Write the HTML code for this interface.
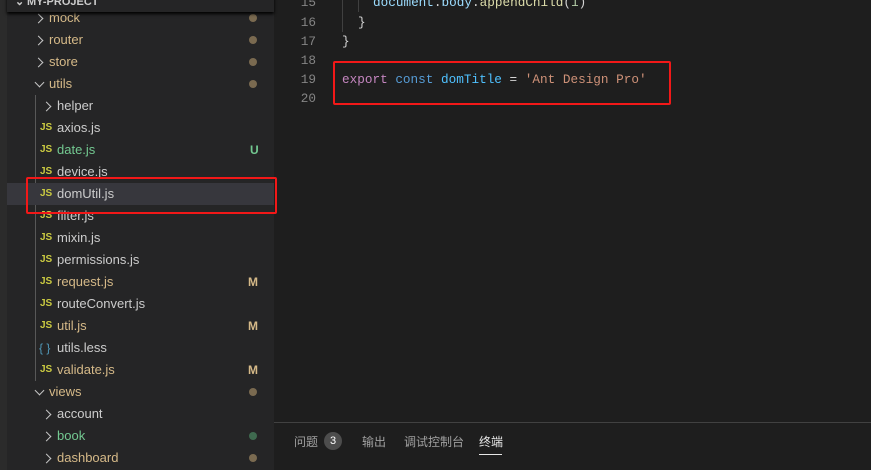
<!DOCTYPE html>
<html><head><meta charset="utf-8"><style>
*{margin:0;padding:0;box-sizing:border-box}
body{width:871px;height:470px;overflow:hidden;background:#1e1e1e;position:relative;font-family:"Segoe UI","Liberation Sans","Noto Sans CJK SC",sans-serif}
#strip{position:absolute;left:0;top:0;width:7px;height:470px;background:#2b2b2b}
#side{position:absolute;left:7px;top:0;width:267px;height:470px;background:#252526}
#hdr{position:absolute;left:7px;top:-6px;width:267px;height:18px;background:#252526;box-shadow:0 2px 3px #000;color:#ccc;font-weight:bold;font-size:11px;z-index:2}
.row{position:absolute;left:7px;width:267px;height:22px;line-height:22px;font-size:13px;color:#ccc}
.row span.t{position:absolute}
.chev{position:absolute;width:7px;height:7px;border-right:1.3px solid #c5c5c5;border-bottom:1.3px solid #c5c5c5}
.js{position:absolute;font-size:10px;font-weight:bold;color:#cbcb41;font-family:"Liberation Sans",sans-serif}
.dot{position:absolute;left:242px;top:7px;width:8px;height:8px;border-radius:50%;background:#7a6a50}
.st{position:absolute;left:241px;font-weight:bold;font-size:12px}
.y{color:#d5b988}.g{color:#73c991}
#code{position:absolute;left:274px;top:2px;width:597px;height:420px;font-family:"Liberation Mono",monospace;font-size:12.7px}
.ln{position:absolute;width:42px;text-align:right;color:#858585;left:0}
.cl{position:absolute;left:68px;white-space:pre;color:#d4d4d4}
.box{position:absolute;border:2.5px solid #f21818;border-radius:2px}
#panel{position:absolute;left:274px;top:422px;width:597px;height:48px;border-top:1px solid #414141;background:#1e1e1e;font-size:12px;color:#a0a0a0}
#panel span{position:absolute;top:10px}
</style></head><body>
<div id="strip"></div><div id="side"></div>
<div id="hdr"><span style="position:absolute;left:8px;top:1px">⌄</span><span style="position:absolute;left:20px;top:2px">MY-PROJECT</span></div>
<div style="position:absolute;left:35px;top:95px;width:1px;height:286px;background:#585858"></div>

<div class="row y" style="top:7px"><div class="chev" style="left:28px;top:8px;transform:rotate(-45deg)"></div><span class="t" style="left:42px">mock</span><div class="dot"></div></div>
<div class="row y" style="top:29px"><div class="chev" style="left:28px;top:8px;transform:rotate(-45deg)"></div><span class="t" style="left:42px">router</span><div class="dot"></div></div>
<div class="row y" style="top:51px"><div class="chev" style="left:28px;top:8px;transform:rotate(-45deg)"></div><span class="t" style="left:42px">store</span><div class="dot"></div></div>
<div class="row y" style="top:73px"><div class="chev" style="left:29px;top:6px;transform:rotate(45deg)"></div><span class="t" style="left:42px">utils</span><div class="dot"></div></div>
<div class="row" style="top:95px"><div class="chev" style="left:36px;top:8px;transform:rotate(-45deg)"></div><span class="t" style="left:50px">helper</span></div>
<div class="row" style="top:117px"><span class="js" style="left:33px">JS</span><span class="t" style="left:50px">axios.js</span></div>
<div class="row g" style="top:139px"><span class="js" style="left:33px">JS</span><span class="t" style="left:50px">date.js</span><span class="st" style="left:243px">U</span></div>
<div class="row" style="top:161px"><span class="js" style="left:33px">JS</span><span class="t" style="left:50px">device.js</span></div>
<div class="row" style="top:183px;background:#37373d"><span class="js" style="left:33px">JS</span><span class="t" style="left:50px">domUtil.js</span></div>
<div class="row" style="top:205px"><span class="js" style="left:33px">JS</span><span class="t" style="left:50px">filter.js</span></div>
<div class="row" style="top:227px"><span class="js" style="left:33px">JS</span><span class="t" style="left:50px">mixin.js</span></div>
<div class="row" style="top:249px"><span class="js" style="left:33px">JS</span><span class="t" style="left:50px">permissions.js</span></div>
<div class="row y" style="top:271px"><span class="js" style="left:33px">JS</span><span class="t" style="left:50px">request.js</span><span class="st" style="left:241px">M</span></div>
<div class="row" style="top:293px"><span class="js" style="left:33px">JS</span><span class="t" style="left:50px">routeConvert.js</span></div>
<div class="row y" style="top:315px"><span class="js" style="left:33px">JS</span><span class="t" style="left:50px">util.js</span><span class="st" style="left:241px">M</span></div>
<div class="row" style="top:337px"><span class="js" style="left:32px;color:#519aba;font-weight:normal;font-size:12px">{ }</span><span class="t" style="left:50px">utils.less</span></div>
<div class="row y" style="top:359px"><span class="js" style="left:33px">JS</span><span class="t" style="left:50px">validate.js</span><span class="st" style="left:241px">M</span></div>
<div class="row y" style="top:381px"><div class="chev" style="left:29px;top:6px;transform:rotate(45deg)"></div><span class="t" style="left:42px">views</span><div class="dot"></div></div>
<div class="row" style="top:403px"><div class="chev" style="left:36px;top:8px;transform:rotate(-45deg)"></div><span class="t" style="left:50px">account</span></div>
<div class="row g" style="top:425px"><div class="chev" style="left:36px;top:8px;transform:rotate(-45deg)"></div><span class="t" style="left:50px">book</span><div class="dot" style="background:#3f6a4f"></div></div>
<div class="row y" style="top:447px"><div class="chev" style="left:36px;top:8px;transform:rotate(-45deg)"></div><span class="t" style="left:50px">dashboard</span><div class="dot"></div></div>

<div class="box" style="left:26px;top:177px;width:251px;height:37px"></div>

<div id="code">
<div style="position:absolute;left:68px;top:-8px;width:1px;height:38px;background:#404040"></div>
<div style="position:absolute;left:84px;top:-8px;width:1px;height:18px;background:#404040"></div>
<div class="ln" style="top:-7px">15</div><div class="cl" style="top:-7px;left:99px"><span style="color:#9cdcfe">document</span>.<span style="color:#9cdcfe">body</span>.<span style="color:#dcdcaa">appendChild</span>(<span style="color:#b5cea8">1</span>)</div>
<div class="ln" style="top:13px">16</div><div class="cl" style="top:13px;left:84px">}</div>
<div class="ln" style="top:32px">17</div><div class="cl" style="top:32px">}</div>
<div class="ln" style="top:51px">18</div>
<div class="ln" style="top:70px">19</div><div class="cl" style="top:70px"><span style="color:#c586c0">export</span> <span style="color:#569cd6">const</span> <span style="color:#4fc1ff">domTitle</span> = <span style="color:#ce9178">'Ant Design Pro'</span></div>
<div class="ln" style="top:89px">20</div>
</div>
<div class="box" style="left:333px;top:61px;width:338px;height:44px"></div>

<div id="panel">
<span style="left:20px">问题</span>
<div style="position:absolute;left:50px;top:9px;width:18px;height:18px;border-radius:50%;background:#4d4d4d;color:#fff;text-align:center;line-height:18px;font-size:11px">3</div>
<span style="left:88px">输出</span>
<span style="left:130px">调试控制台</span>
<span style="left:205px;color:#e7e7e7">终端</span>
<div style="position:absolute;left:205px;top:31px;width:23px;height:1px;background:#e7e7e7"></div>
</div>
</body></html>
